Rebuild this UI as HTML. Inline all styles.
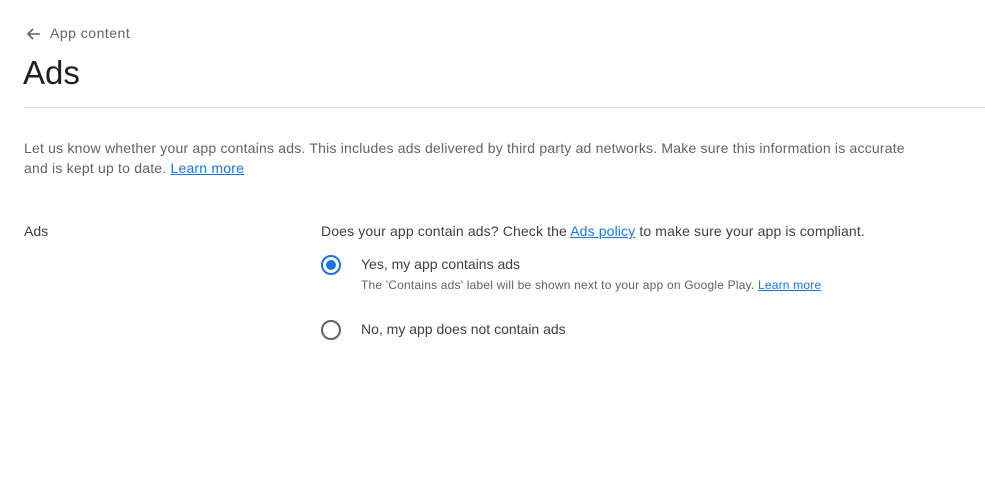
<!DOCTYPE html>
<html><head><style>
body{margin:0;width:985px;height:496px;background:#fff;font-family:"Liberation Sans",Arial,sans-serif;position:relative;overflow:hidden}
.a{position:absolute;white-space:nowrap}
a{color:#1a73e8;text-decoration:underline}
</style></head><body>
<svg class="a" style="left:25px;top:26px" width="16" height="16" viewBox="0 0 16 16"><path d="M15 8H3M8 3L3 8l5 5" fill="none" stroke="#5f6368" stroke-width="1.6"/></svg>
<div class="a" style="left:50px;top:25px;font-size:14px;color:#5f6368;line-height:16px;letter-spacing:0.5px">App content</div>
<div class="a" style="left:23px;top:53px;font-size:33px;color:#202124;line-height:40px">Ads</div>
<div class="a" style="left:24px;top:107px;width:961px;height:1px;background:#dadce0"></div>
<div class="a" style="left:24px;top:138px;font-size:14px;color:#5f6368;line-height:20px;letter-spacing:0.2px">Let us know whether your app contains ads. This includes ads delivered by third party ad networks. Make sure this information is accurate<br>and is kept up to date. <a>Learn more</a></div>
<div class="a" style="left:24px;top:221px;font-size:14px;color:#3c4043;line-height:20px">Ads</div>
<div class="a" style="left:321px;top:221px;font-size:14px;color:#3c4043;line-height:20px;letter-spacing:0.13px">Does your app contain ads? Check the <a>Ads policy</a> to make sure your app is compliant.</div>
<svg class="a" style="left:320px;top:254px" width="22" height="22"><circle cx="11" cy="11" r="9" fill="none" stroke="#1a73e8" stroke-width="2"/><circle cx="11" cy="11" r="5" fill="#1a73e8"/></svg>
<div class="a" style="left:361px;top:254px;font-size:14px;color:#3c4043;line-height:20px">Yes, my app contains ads</div>
<div class="a" style="left:361px;top:277px;font-size:12px;color:#5f6368;line-height:16px;letter-spacing:0.2px">The 'Contains ads' label will be shown next to your app on Google Play. <a>Learn more</a></div>
<svg class="a" style="left:320px;top:319px" width="22" height="22"><circle cx="11" cy="11" r="9" fill="none" stroke="#5f6368" stroke-width="2"/></svg>
<div class="a" style="left:361px;top:319px;font-size:14px;color:#3c4043;line-height:20px">No, my app does not contain ads</div>
</body></html>
